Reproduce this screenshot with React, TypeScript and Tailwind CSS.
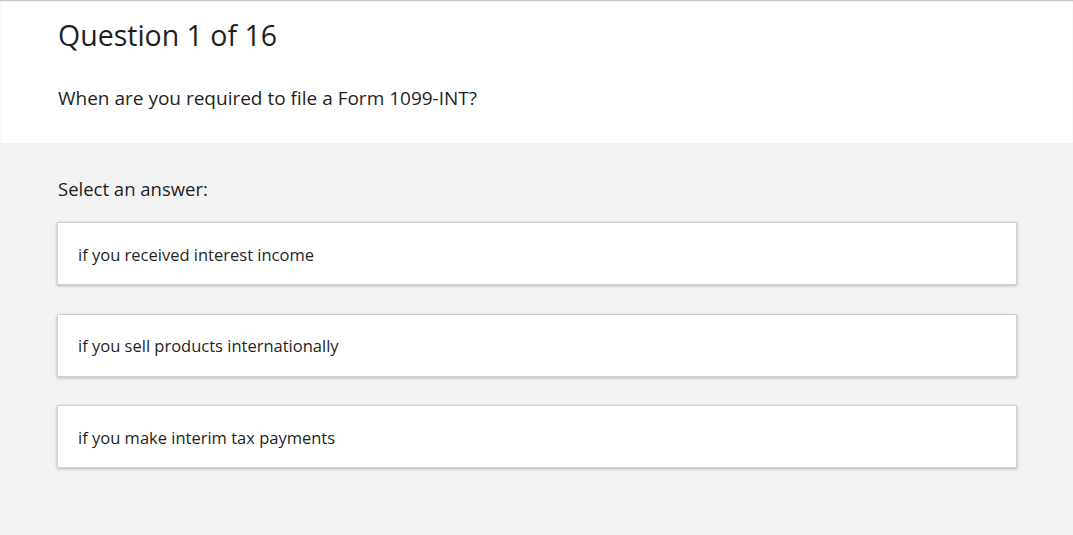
import React from "react";

const options = [
  "if you received interest income",
  "if you sell products internationally",
  "if you make interim tax payments",
];

export default function App() {
  return (
    <div
      className="w-[1073px] h-[535px] overflow-hidden bg-[#f3f3f3] text-[#1f1f1f]"
      style={{ fontFamily: '"Open Sans", "Noto Sans", sans-serif' }}
    >
      <div className="h-[143px] bg-white border-t border-[#c8c8c8] shadow-[inset_0_1px_2px_rgba(0,0,0,0.08)] pl-[58px] pt-[14px]">
        <h1 className="text-[28.5px] leading-[40px] font-normal">Question 1 of 16</h1>
        <p className="mt-[30px] text-[19px] leading-[26px]">
          When are you required to file a Form 1099-INT?
        </p>
      </div>
      <div className="px-[57px] pt-[33px]">
        <p className="text-[18.5px] leading-[26px] pl-[1px]">Select an answer:</p>
        <div className="mt-[20px] flex flex-col gap-[28.5px] w-[960px]">
          {options.map((o) => (
            <div
              key={o}
              className="h-[63px] bg-white border border-[#d0d0d0] shadow-[0_1px_3px_rgba(0,0,0,0.25)] flex items-center pl-[20px] pt-[3px] text-[16.5px]"
            >
              {o}
            </div>
          ))}
        </div>
      </div>
    </div>
  );
}
